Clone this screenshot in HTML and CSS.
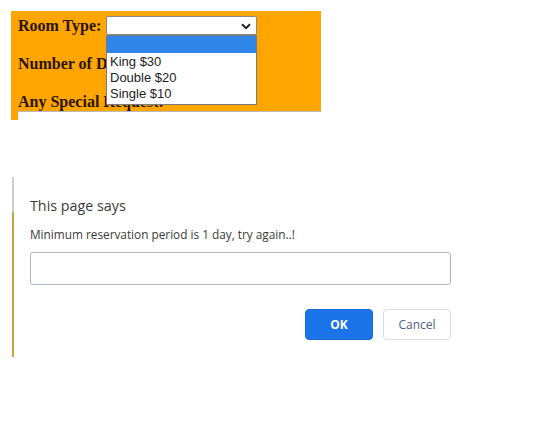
FILE: index.html
```html
<!DOCTYPE html>
<html>
<head>
<meta charset="utf-8">
<link rel="stylesheet" href="styles.css">
</head>
<body>
<div class="page">
  <form class="booking">
    <div class="row row-first">
      <label class="lbl">Room Type:</label>
      <div class="select">
        <svg class="chev" width="10" height="7" viewBox="0 0 10 7"><path d="M1 1.2 L5 5.2 L9 1.2" fill="none" stroke="#222" stroke-width="2"/></svg>
      </div>
    </div>
    <div class="row row-second">
      <label class="lbl">Number of Days:</label>
    </div>
    <div class="row row-third">
      <label class="lbl">Any Special Request:</label>
    </div>
    <div class="textarea"></div>
    <ul class="dropdown">
      <li class="opt opt-active">&nbsp;</li>
      <li class="opt">King $30</li>
      <li class="opt">Double $20</li>
      <li class="opt">Single $10</li>
    </ul>
  </form>

  <div class="dialog">
    <div class="dlg-title">This page says</div>
    <div class="dlg-msg">Minimum reservation period is 1 day, try again..!</div>
    <div class="dlg-input"></div>
    <div class="dlg-actions">
      <button class="btn btn-ok" type="button">OK</button>
      <button class="btn btn-cancel" type="button">Cancel</button>
    </div>
  </div>
</div>
</body>
</html>
```

FILE: styles.css
```css
html, body {
  margin: 0;
  padding: 0;
  background: #ffffff;
}

.page {
  width: 548px;
  height: 442px;
  overflow: hidden;
}

.booking {
  position: relative;
  margin: 11px 0 0 11px;
  width: 310px;
  height: 109px;
  background: #ffa500;
  display: flex;
  flex-direction: column;
  padding: 0;
  overflow: hidden;
  box-sizing: border-box;
}

.row {
  display: flex;
  align-items: center;
  padding-left: 7px;
}

.row-first {
  margin-top: 5px;
  height: 19px;
}

.row-second {
  margin-top: 20px;
  height: 19px;
}

.row-third {
  margin-top: 20px;
  height: 19px;
}

.lbl {
  font-family: "Liberation Serif", "Times New Roman", serif;
  font-weight: bold;
  font-size: 16px;
  color: #2a1400;
  white-space: nowrap;
}

.select {
  position: relative;
  margin-left: 5px;
  width: 151px;
  height: 19px;
  box-sizing: border-box;
  background: #fff;
  border: 1px solid #8a8a8a;
  border-radius: 2px;
}

.chev {
  position: absolute;
  right: 5px;
  top: 6px;
}

.textarea {
  margin: 0 0 0 7px;
  height: 10px;
  background: #fff;
  border-top: 1px solid #b9b9b9;
}

.dropdown {
  position: absolute;
  left: 95px;
  top: 24px;
  width: 151px;
  height: 70px;
  box-sizing: border-box;
  margin: 0;
  padding: 0;
  list-style: none;
  background: #fff;
  border: 1px solid #7a7a7a;
}

.opt {
  font-family: "Liberation Sans", Arial, sans-serif;
  font-size: 13px;
  line-height: 16px;
  height: 16px;
  padding-left: 3px;
  color: #222;
}

.opt-active {
  background: #2f86e8;
  height: 17px;
  margin-bottom: 1px;
}

.dialog {
  margin: 57px 0 0 12px;
  width: 454px;
  box-sizing: border-box;
  padding: 19px 15px 17px 16px;
  background: #fff;
  border-left: 2px solid #c8a43c;
  border-image: linear-gradient(to bottom, #cfcfcf 0, #cfcfcf 20%, #c9a43e 20%, #c9a43e 100%) 1;
  font-family: "Open Sans", "Noto Sans", sans-serif;
}

.dlg-title {
  font-size: 14.3px;
  line-height: 20px;
  color: #3a3a3a;
}

.dlg-msg {
  margin-top: 9px;
  font-size: 11.8px;
  line-height: 18px;
  color: #3a3a3a;
}

.dlg-input {
  margin-top: 9px;
  width: 421px;
  height: 33px;
  box-sizing: border-box;
  border: 1.5px solid #aab7c2;
  border-radius: 3px;
  background: #fff;
}

.dlg-actions {
  margin-top: 24px;
  display: flex;
  justify-content: flex-end;
  gap: 10px;
  width: 421px;
}

.btn {
  width: 68px;
  height: 31px;
  border-radius: 4px;
  font-family: "Open Sans", "Noto Sans", sans-serif;
  font-size: 12px;
  cursor: pointer;
}

.btn-ok {
  background: #1a73e8;
  border: 1px solid #1a6bd6;
  color: #fff;
  font-weight: bold;
}

.btn-cancel {
  background: #fff;
  border: 1px solid #dadce0;
  color: #4d6186;
}
```
